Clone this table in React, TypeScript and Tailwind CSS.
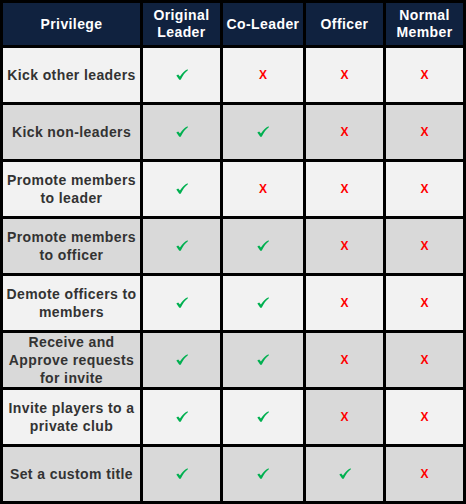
// Privilege table for club roles
type Cell = { ok: boolean; gray?: boolean };

interface Row {
  label: string[];
  gray: boolean;
  cells: Cell[];
}

const headers: string[][] = [
  ['Privilege'],
  ['Original', 'Leader'],
  ['Co-Leader'],
  ['Officer'],
  ['Normal', 'Member'],
];

const y = (ok: boolean, gray?: boolean): Cell => ({ ok, gray });

const rows: Row[] = [
  { label: ['Kick other leaders'], gray: false, cells: [y(true), y(false), y(false), y(false)] },
  { label: ['Kick non-leaders'], gray: true, cells: [y(true), y(true), y(false), y(false)] },
  { label: ['Promote members', 'to leader'], gray: false, cells: [y(true), y(false), y(false), y(false)] },
  { label: ['Promote members', 'to officer'], gray: true, cells: [y(true), y(true), y(false), y(false)] },
  { label: ['Demote officers to', 'members'], gray: false, cells: [y(true), y(true), y(false), y(false)] },
  {
    label: ['Receive and', 'Approve requests', 'for invite'],
    gray: true,
    cells: [y(true), y(true), y(false), y(false)],
  },
  {
    label: ['Invite players to a', 'private club'],
    gray: false,
    cells: [y(true), y(true), y(false, true), y(false)],
  },
  { label: ['Set a custom title'], gray: true, cells: [y(true), y(true), y(true), y(false)] },
];

function Check() {
  return (
    <svg width="12" height="11" viewBox="0 0 11 10" className="-mt-[2px]">
      <path d="M0.3 6 L2 4.9 L3.6 6.9 C5.5 4 7.8 1.6 10.6 0.2 L10.9 1 C8.4 2.9 6.3 5.6 4.3 9.8 L3 9.8 Z" fill="#00b050" />
    </svg>
  );
}

function Cross() {
  return <span className="text-[12px] font-bold leading-none text-[#ff0000]">X</span>;
}

export default function App() {
  return (
    <div
      className="w-[466px] h-[504px] bg-black p-[3px] grid grid-cols-[137px_77px_80px_77px_77px] grid-rows-[42px_repeat(8,54px)] gap-[3px]"
      style={{ fontFamily: '"Liberation Sans", Arial, sans-serif' }}
    >
      {headers.map((h) => (
        <div
          key={h.join(' ')}
          className="bg-[#10223f] flex flex-col items-center justify-center text-white font-bold text-[14px] leading-[17px] tracking-[0.4px] text-center"
        >
          {h.map((line) => (
            <span key={line}>{line}</span>
          ))}
        </div>
      ))}

      {rows.map((row) => (
        <>
          <div
            key={row.label.join(' ')}
            className={`${row.gray ? 'bg-[#d9d9d9]' : 'bg-[#f2f2f2]'} flex flex-col items-center justify-center text-[#333333] font-bold text-[14px] leading-[18px] tracking-[0.4px] text-center whitespace-nowrap`}
          >
            {row.label.map((line) => (
              <span key={line}>{line}</span>
            ))}
          </div>
          {row.cells.map((c, i) => (
            <div
              key={row.label.join(' ') + i}
              className={`${row.gray || c.gray ? 'bg-[#d9d9d9]' : 'bg-[#f2f2f2]'} flex items-center justify-center`}
            >
              {c.ok ? <Check /> : <Cross />}
            </div>
          ))}
        </>
      ))}
    </div>
  );
}
